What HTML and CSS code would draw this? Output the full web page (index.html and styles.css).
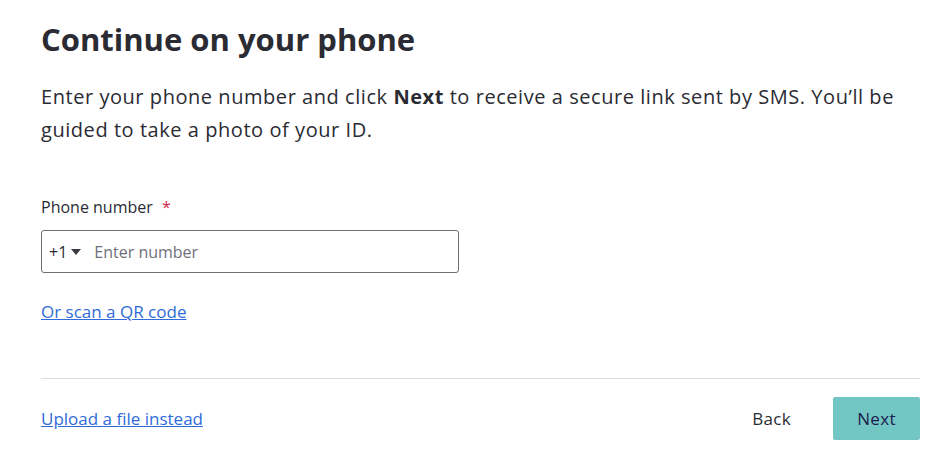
FILE: index.html
```html
<!DOCTYPE html>
<html lang="en">
<head>
<meta charset="utf-8">
<link rel="stylesheet" href="styles.css">
</head>
<body>
<main class="page">
  <h1 class="title">Continue on your phone</h1>
  <p class="intro">Enter your phone number and click <strong>Next</strong> to receive a secure link sent by SMS. You’ll be guided to take a photo of your ID.</p>
  <div class="field">
    <label class="label">Phone number <span class="req">*</span></label>
    <div class="input">
      <span class="code">+1</span>
      <svg class="caret" width="10" height="6" viewBox="0 0 10 6"><path d="M0 0h10L5 6z" fill="#3a3a44"/></svg>
      <span class="placeholder">Enter number</span>
    </div>
  </div>
  <a class="link qr" href="#">Or scan a QR code</a>
  <footer class="footer">
    <a class="link" href="#">Upload a file instead</a>
    <div class="actions">
      <button class="btn back">Back</button>
      <button class="btn next">Next</button>
    </div>
  </footer>
</main>
</body>
</html>
```
FILE: styles.css
```css
html, body { margin: 0; background: #fff; }
body { font-family: "Open Sans", "Noto Sans", sans-serif; color: #2b2b33; }
.page { padding: 0 16px 0 41px; display: flex; flex-direction: column; }
.title { margin: 19px 0 0; font-size: 31px; font-weight: 700; line-height: 40px; color: #2b2b33; }
.intro { margin: 21px 0 0; font-size: 20px; letter-spacing: 0.55px; line-height: 33px; color: #2b2b33; max-width: 870px; }
.intro strong { font-weight: 700; }
.field { margin-top: 51px; display: flex; flex-direction: column; }
.label { font-size: 16px; line-height: 20px; font-weight: 500; }
.req { color: #d0284c; margin-left: 5px; }
.input { margin-top: 13px; width: 418px; height: 43px; box-sizing: border-box; border: 1px solid #6d6d76; border-radius: 3px; display: flex; align-items: center; padding-left: 7px; font-size: 16px; }
.code { color: #2b2b33; }
.caret { margin-left: 4px; }
.placeholder { margin-left: 13px; color: #70707a; }
.link { color: #2f6bd9; text-decoration: underline; font-size: 17px; line-height: 20px; }
.qr { margin-top: 29px; align-self: flex-start; }
.footer { margin-top: 56px; border-top: 1px solid #dcdcdf; display: flex; justify-content: space-between; align-items: center; padding-top: 18px; }
.actions { display: flex; align-items: center; gap: 42px; }
.btn { font-family: inherit; font-size: 17px; border: 0; background: none; cursor: pointer; }
.back { color: #2b2b33; padding: 0; letter-spacing: 0.3px; }
.next { background: #72c6c4; color: #1b1d4b; width: 87px; height: 43px; border-radius: 2px; font-weight: 500; letter-spacing: 0.3px; }
```
